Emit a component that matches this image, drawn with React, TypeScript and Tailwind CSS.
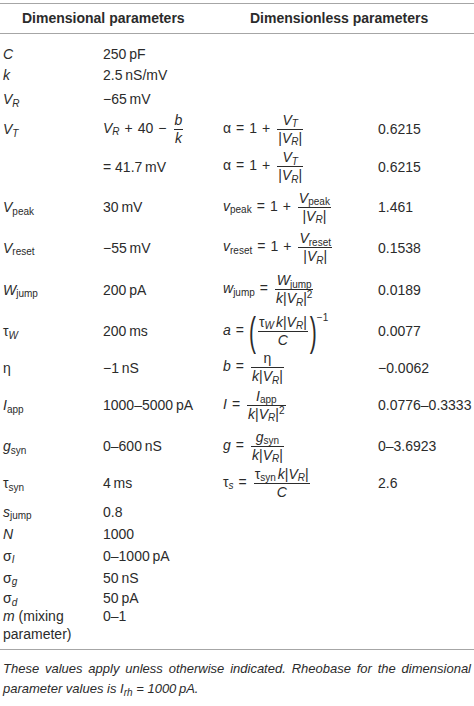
import React from "react";

type Node = React.ReactNode;

const Sub = ({ children, it = false }: { children: Node; it?: boolean }) => (
  <sub className={it ? "italic text-[10px]" : "not-italic text-[10px]"}>{children}</sub>
);

const Op = ({ c }: { c: string }) => <span className="mx-[5px]">{c}</span>;

const Vr = () => (
  <>
    <i>V</i>
    <Sub it>R</Sub>
  </>
);

const AbsVr = () => (
  <>
    |<Vr />|
  </>
);

const Frac = ({ n, d }: { n: Node; d: Node }) => (
  <span className="inline-flex flex-col items-center align-middle mx-[2px] text-[14px] leading-[15px]">
    <span className="px-[1px] pb-[1px]">{n}</span>
    <span className="self-stretch h-px bg-[#2b2b2b]" />
    <span className="px-[1px] pt-[1px]">{d}</span>
  </span>
);

const Paren = ({ c }: { c: string }) => (
  <span className="inline-block align-middle text-[21px] leading-none scale-y-[1.9] font-light">{c}</span>
);

const Line = () => <div className="w-full h-[1px] border-t border-[#a6a6a6]" />;

interface Row {
  h: string;
  a: Node;
  b?: Node;
  c?: Node;
  d?: Node;
}

const alpha = (
  <>
    α<Op c="=" />1<Op c="+" />
    <Frac
      n={
        <>
          <i>V</i>
          <Sub it>T</Sub>
        </>
      }
      d={<AbsVr />}
    />
  </>
);

const rows: Row[] = [
  { h: "h-[30px] pt-[10px]", a: <i>C</i>, b: "250\u2009pF" },
  { h: "h-[22px]", a: <i>k</i>, b: "2.5\u2009nS/mV" },
  { h: "h-[26px]", a: <Vr />, b: "\u221265\u2009mV" },
  {
    h: "h-[34px]",
    a: (
      <>
        <i>V</i>
        <Sub it>T</Sub>
      </>
    ),
    b: (
      <>
        <Vr />
        <Op c="+" />
        40
        <Op c="−" />
        <Frac n={<i>b</i>} d={<i>k</i>} />
      </>
    ),
    c: alpha,
    d: "0.6215",
  },
  { h: "h-[41px]", a: null, b: "= 41.7\u2009mV", c: alpha, d: "0.6215" },
  {
    h: "h-[40px]",
    a: (
      <>
        <i>V</i>
        <Sub>peak</Sub>
      </>
    ),
    b: "30\u2009mV",
    c: (
      <>
        <i>v</i>
        <Sub>peak</Sub>
        <Op c="=" />1<Op c="+" />
        <Frac
          n={
            <>
              <i>V</i>
              <Sub>peak</Sub>
            </>
          }
          d={<AbsVr />}
        />
      </>
    ),
    d: "1.461",
  },
  {
    h: "h-[41px]",
    a: (
      <>
        <i>V</i>
        <Sub>reset</Sub>
      </>
    ),
    b: "\u221255\u2009mV",
    c: (
      <>
        <i>v</i>
        <Sub>reset</Sub>
        <Op c="=" />1<Op c="+" />
        <Frac
          n={
            <>
              <i>V</i>
              <Sub>reset</Sub>
            </>
          }
          d={<AbsVr />}
        />
      </>
    ),
    d: "0.1538",
  },
  {
    h: "h-[43px]",
    a: (
      <>
        <i>W</i>
        <Sub>jump</Sub>
      </>
    ),
    b: "200\u2009pA",
    c: (
      <>
        <i>w</i>
        <Sub>jump</Sub>
        <Op c="=" />
        <Frac
          n={
            <>
              <i>W</i>
              <Sub>jump</Sub>
            </>
          }
          d={
            <>
              <i>k</i>
              <AbsVr />
              <sup className="text-[10px]">2</sup>
            </>
          }
        />
      </>
    ),
    d: "0.0189",
  },
  {
    h: "h-[40px]",
    a: (
      <>
        τ<Sub it>W</Sub>
      </>
    ),
    b: "200\u2009ms",
    c: (
      <>
        <i>a</i>
        <Op c="=" />
        <Paren c="(" />
        <Frac
          n={
            <>
              τ<Sub it>W</Sub>
              <i className="ml-[2px]">k</i>
              <AbsVr />
            </>
          }
          d={<i>C</i>}
        />
        <Paren c=")" />
        <sup className="text-[10px] -top-[14px]">−1</sup>
      </>
    ),
    d: "0.0077",
  },
  {
    h: "h-[33px]",
    a: "η",
    b: "\u22121\u2009nS",
    c: (
      <>
        <i>b</i>
        <Op c="=" />
        <Frac
          n="η"
          d={
            <>
              <i>k</i>
              <AbsVr />
            </>
          }
        />
      </>
    ),
    d: "\u22120.0062",
  },
  {
    h: "h-[42px]",
    a: (
      <>
        <i>I</i>
        <Sub>app</Sub>
      </>
    ),
    b: "1000–5000\u2009pA",
    c: (
      <>
        <i>I</i>
        <Op c="=" />
        <Frac
          n={
            <>
              <i>I</i>
              <Sub>app</Sub>
            </>
          }
          d={
            <>
              <i>k</i>
              <AbsVr />
              <sup className="text-[10px]">2</sup>
            </>
          }
        />
      </>
    ),
    d: "0.0776–0.3333",
  },
  {
    h: "h-[40px]",
    a: (
      <>
        <i>g</i>
        <Sub>syn</Sub>
      </>
    ),
    b: "0–600\u2009nS",
    c: (
      <>
        <i>g</i>
        <Op c="=" />
        <Frac
          n={
            <>
              <i>g</i>
              <Sub>syn</Sub>
            </>
          }
          d={
            <>
              <i>k</i>
              <AbsVr />
            </>
          }
        />
      </>
    ),
    d: "0–3.6923",
  },
  {
    h: "h-[34px]",
    a: (
      <>
        τ<Sub>syn</Sub>
      </>
    ),
    b: "4\u2009ms",
    c: (
      <>
        τ<Sub it>s</Sub>
        <Op c="=" />
        <Frac
          n={
            <>
              τ<Sub>syn</Sub>
              <i className="ml-[2px]">k</i>
              <AbsVr />
            </>
          }
          d={<i>C</i>}
        />
      </>
    ),
    d: "2.6",
  },
  {
    h: "h-[23px]",
    a: (
      <>
        <i>s</i>
        <Sub>jump</Sub>
      </>
    ),
    b: "0.8",
  },
  { h: "h-[21px]", a: <i>N</i>, b: "1000" },
  {
    h: "h-[23px]",
    a: (
      <>
        σ<Sub it>I</Sub>
      </>
    ),
    b: "0–1000\u2009pA",
  },
  {
    h: "h-[21px]",
    a: (
      <>
        σ<Sub it>g</Sub>
      </>
    ),
    b: "50\u2009nS",
  },
  {
    h: "h-[19px]",
    a: (
      <>
        σ<Sub it>d</Sub>
      </>
    ),
    b: "50\u2009pA",
  },
];

export default function App() {
  return (
    <div
      className="w-[474px] h-[706px] bg-white text-[#2b2b2b] text-[14px] overflow-hidden"
      style={{ fontFamily: '"Liberation Sans", Arial, sans-serif' }}
    >
      <div className="h-[3px]" />
      <Line />
      <div className="h-[29px] grid grid-cols-[220px_1fr] items-center font-bold">
        <div className="pl-[22px]">Dimensional parameters</div>
        <div className="pl-[30px]">Dimensionless parameters</div>
      </div>
      <Line />

      {rows.map((r, i) => (
        <div
          key={i}
          className={`${r.h} pl-[3px] grid grid-cols-[100px_120px_155px_1fr] items-center leading-[20px] whitespace-nowrap`}
        >
          <div>{r.a}</div>
          <div>{r.b}</div>
          <div>{r.c}</div>
          <div>{r.d}</div>
        </div>
      ))}

      <div className="h-[42px] pl-[3px] grid grid-cols-[100px_120px_155px_1fr] items-start leading-[18px]">
        <div>
          <i>m</i> (mixing parameter)
        </div>
        <div>0–1</div>
      </div>
      <Line />

      <p className="px-[3px] pt-[9px] text-[13px] leading-[20px] italic text-justify">
        These values apply unless otherwise indicated. Rheobase for the dimensional parameter values is{" "}
        <i>I</i>
        <sub className="italic text-[10px]">rh</sub> = 1000{"\u2009"}pA.
      </p>
    </div>
  );
}
